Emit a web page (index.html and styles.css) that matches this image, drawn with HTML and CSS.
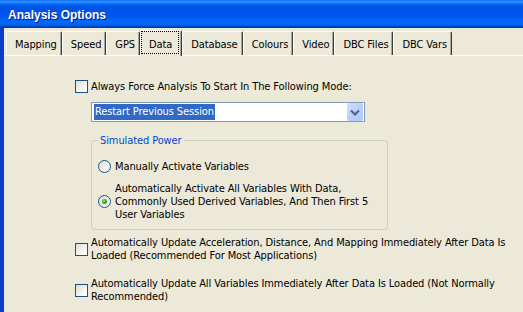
FILE: index.html
```html
<!DOCTYPE html>
<html>
<head>
<meta charset="utf-8">
<title>Analysis Options</title>
<link rel="stylesheet" href="styles.css">
</head>
<body>
<div class="window">
  <div class="titlebar">Analysis Options</div>
  <div class="frame">
    <div class="client">
      <div class="tabs">
        <div class="tab">Mapping</div>
        <div class="tab">Speed</div>
        <div class="tab">GPS</div>
        <div class="tab selected"><span class="focus">Data</span></div>
        <div class="tab">Database</div>
        <div class="tab">Colours</div>
        <div class="tab">Video</div>
        <div class="tab">DBC Files</div>
        <div class="tab">DBC Vars</div>
      </div>
      <div class="panel">
        <div class="check-row">
          <span class="checkbox"></span>
          <span class="label">Always Force Analysis To Start In The Following Mode:</span>
        </div>
        <div class="combo">
          <span class="combo-text">Restart Previous Session</span>
          <span class="combo-btn">
            <svg width="16" height="18" viewBox="0 0 16 18"><path d="M4 7.5 L8 11.5 L12 7.5" fill="none" stroke="#4D6185" stroke-width="2"/></svg>
          </span>
        </div>
        <fieldset class="group">
          <legend>Simulated Power</legend>
          <div class="radio-row first">
            <span class="radio"></span>
            <span class="label">Manually Activate Variables</span>
          </div>
          <div class="radio-row second">
            <span class="radio checked"></span>
            <span class="label">Automatically Activate All Variables With Data,<br>Commonly Used Derived Variables, And Then First 5<br>User Variables</span>
          </div>
        </fieldset>
        <div class="check-row multi third">
          <span class="checkbox"></span>
          <span class="label">Automatically Update Acceleration, Distance, And Mapping Immediately After Data Is<br>Loaded (Recommended For Most Applications)</span>
        </div>
        <div class="check-row multi fourth">
          <span class="checkbox"></span>
          <span class="label">Automatically Update All Variables Immediately After Data Is Loaded (Not Normally<br>Recommended)</span>
        </div>
      </div>
    </div>
  </div>
</div>
</body>
</html>
```
FILE: styles.css
```css
* { box-sizing: border-box; }
html, body { margin: 0; padding: 0; }
body {
  width: 523px;
  height: 312px;
  overflow: hidden;
  background: #ECE9D8;
  font-family: "DejaVu Sans Condensed", "Liberation Sans", sans-serif;
  font-size: 11px;
  line-height: 13px;
  letter-spacing: -0.1px;
  color: #000;
}
.window { display: flex; flex-direction: column; height: 312px; }
.titlebar {
  flex: none;
  height: 28px;
  padding: 3px 0 0 8px;
  line-height: 24px;
  font-family: "Liberation Sans", sans-serif;
  font-weight: bold;
  font-size: 12px;
  letter-spacing: 0;
  color: #fff;
  text-shadow: 1px 1px #0A1883;
  background: linear-gradient(to bottom, #0058EE 0px, #3A93FF 1px, #288EFF 2px, #127DFF 3px, #036FFC 4px, #0262EE 5px, #0057E5 6px, #0054E3 8px, #0055EB 14px, #005BF5 18px, #026AFE 22px, #0062EF 25px, #0052D6 26px, #0040AB 27px, #003092 28px);
}
.frame {
  flex: 1;
  display: flex;
  border-left: 4px solid #0855DD;
  border-image: linear-gradient(to right, #0A3FC6 25%, #166AF0 25%, #166AF0 75%, #0B4ED8 75%) 1;
}
.client { flex: 1; display: flex; flex-direction: column; }
.tabs { flex: none; display: flex; align-items: flex-start; height: 27px; padding: 3px 0 0 2px; }
.tab {
  height: 24px;
  padding: 6px 4px 0 8px;
  border-top: 1px solid #fff;
  border-left: 1px solid #fff;
  border-right: 1px solid #3A3A3A;
  box-shadow: inset -1px 0 #ACA899;
  border-radius: 2px 2px 0 0;
  white-space: nowrap;
  background: #ECE9D8;
}
.tab.selected {
  position: relative;
  z-index: 1;
  height: 26px;
  margin-top: -1px;
  padding: 0 2px 0 0;
}
.focus {
  display: block;
  border: 1px dotted #000;
  padding: 6px 6px 2px 7px;
}
.panel {
  flex: 1;
  border-top: 1px solid #fff;
  padding: 24px 0 0 71px;
}
.check-row { display: flex; align-items: center; gap: 3px; }
.checkbox {
  flex: none;
  width: 13px;
  height: 13px;
  border: 1px solid #1C5180;
  background: linear-gradient(135deg, #DCDCD7 0%, #EEEEEA 45%, #FBFBFA 75%, #FFFFFF 100%);
}
.combo {
  display: flex;
  align-items: center;
  width: 274px;
  height: 20px;
  margin: 9px 0 0 16px;
  padding: 0 1px;
  border: 1px solid #7F9DB9;
  background: #fff;
}
.combo-text {
  margin-left: 1px;
  padding: 0 1px;
  line-height: 16px;
  background: #316AC5;
  color: #fff;
}
.combo-btn {
  margin-left: auto;
  width: 16px;
  height: 18px;
  border-radius: 2px;
  background: linear-gradient(135deg, #D2E0FC 0%, #BACEFA 50%, #B0C8F8 100%);
}
.combo-btn svg { display: block; }
.group {
  min-width: 0;
  width: 297px;
  margin: 12px 0 0 16px;
  padding: 0 0 8px 6px;
  border: 1px solid #D0D0BF;
  border-radius: 3px;
}
.group legend {
  padding: 0 2px;
  color: #0046D5;
  line-height: 13px;
}
.radio-row { display: flex; align-items: center; gap: 4px; }
.radio-row.first { margin-top: 13px; }
.radio-row.second { margin-top: 9px; }
.radio {
  flex: none;
  position: relative;
  width: 13px;
  height: 13px;
  border-radius: 50%;
  border: 1px solid #1C5180;
  background: linear-gradient(135deg, #DCDCD7 0%, #F0F0EC 50%, #FFFFFF 100%);
}
.radio.checked::after {
  content: "";
  position: absolute;
  left: 3px;
  top: 3px;
  width: 5px;
  height: 5px;
  border-radius: 50%;
  background: radial-gradient(circle at 40% 40%, #7BE27B 0%, #21A121 60%, #1A861A 100%);
}
.check-row.third { margin-top: 6px; }
.check-row.fourth { margin-top: 15px; }
```
